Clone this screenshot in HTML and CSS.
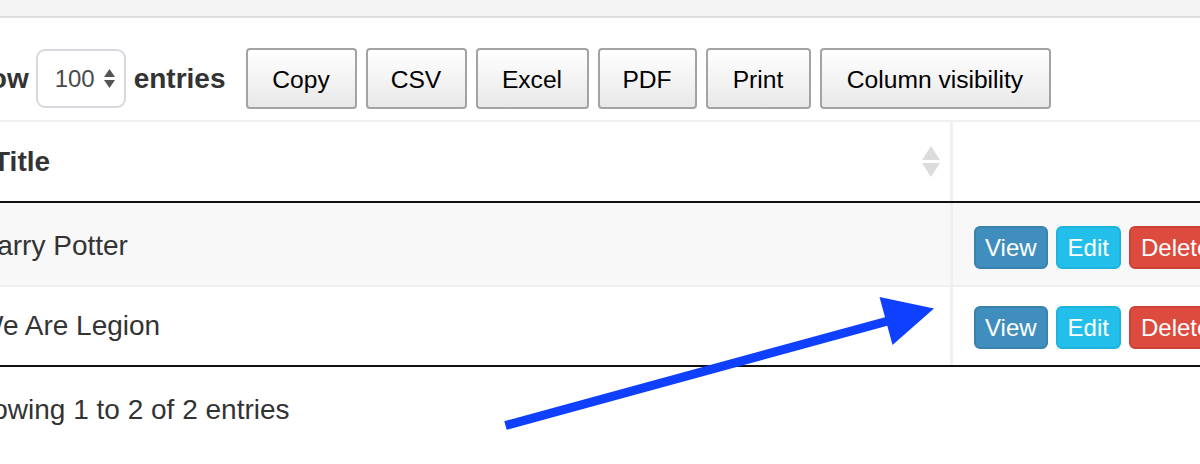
FILE: index.html
```html
<!DOCTYPE html>
<html lang="en">
<head>
<meta charset="utf-8">
<title>Books</title>
<link rel="stylesheet" href="styles.css">
</head>
<body>
<div class="topbar"></div>

<div class="toolbar">
  <div class="length">
    <span class="lbl">Show</span>
    <div class="select">
      <span>100</span>
      <svg class="spin" width="11" height="20" viewBox="0 0 11 20"><polygon points="5.5,0 11,8 0,8" fill="#555"/><polygon points="0,11 11,11 5.5,19" fill="#555"/></svg>
    </div>
    <span class="lbl">entries</span>
  </div>
  <div class="buttons">
    <button class="dt-btn w-copy">Copy</button>
    <button class="dt-btn w-csv">CSV</button>
    <button class="dt-btn w-excel">Excel</button>
    <button class="dt-btn w-pdf">PDF</button>
    <button class="dt-btn w-print">Print</button>
    <button class="dt-btn w-colvis">Column visibility</button>
  </div>
</div>

<div class="table">
  <div class="thead">
    <div class="c-title th">
      <span>Title</span>
      <svg class="sort" width="18" height="32" viewBox="0 0 18 32"><polygon points="9,0 18,14 0,14" fill="#dcdcdc"/><polygon points="0,17 18,17 9,31" fill="#dcdcdc"/></svg>
    </div>
    <div class="c-act"></div>
  </div>
  <div class="row odd">
    <div class="c-title">Harry Potter</div>
    <div class="c-act">
      <span class="bx bx-view">View</span>
      <span class="bx bx-edit">Edit</span>
      <span class="bx bx-del">Delete</span>
    </div>
  </div>
  <div class="row even">
    <div class="c-title">We Are Legion</div>
    <div class="c-act">
      <span class="bx bx-view">View</span>
      <span class="bx bx-edit">Edit</span>
      <span class="bx bx-del">Delete</span>
    </div>
  </div>
</div>

<div class="info">Showing 1 to 2 of 2 entries</div>

<svg class="annot" width="1200" height="464" viewBox="0 0 1200 464">
  <line x1="505.5" y1="425.5" x2="888" y2="321" stroke="#1040ff" stroke-width="9"/>
  <polygon points="879.5,297 934,308.5 892.5,345" fill="#1040ff"/>
</svg>
</body>
</html>
```

FILE: styles.css
```css
html, body {
  margin: 0;
  padding: 0;
}
body {
  width: 1200px;
  height: 464px;
  overflow: hidden;
  position: relative;
  background: #fff;
  color: #333;
  font-family: "Liberation Sans", Arial, Helvetica, sans-serif;
  font-size: 28px;
}

.topbar {
  height: 16px;
  background: #f4f4f4;
  border-bottom: 2px solid #dedede;
}

.toolbar {
  display: flex;
  align-items: center;
  height: 61px;
  margin-top: 30px;
  margin-left: -46px;
}
.length {
  display: flex;
  align-items: center;
  gap: 7px;
}
.lbl {
  font-weight: bold;
  color: #333;
}
.length .lbl:last-child {
  margin-left: 1px;
}
.select {
  box-sizing: border-box;
  width: 90px;
  height: 59px;
  border: 2px solid #d6d9de;
  border-radius: 9px;
  display: flex;
  align-items: center;
  justify-content: space-between;
  padding: 0 9px 0 17px;
  font-size: 24px;
  color: #4a4a4a;
}
.spin {
  display: block;
  margin-top: 1px;
}

.buttons {
  display: flex;
  gap: 9px;
  margin-left: 20px;
}
.dt-btn {
  box-sizing: border-box;
  height: 61px;
  padding: 0;
  border: 2px solid #a3a3a3;
  border-radius: 4px;
  background: linear-gradient(to bottom, #ffffff 0%, #e8e8e8 100%);
  font-family: "Liberation Sans", Arial, Helvetica, sans-serif;
  font-size: 24.6px;
  color: #000;
  text-align: center;
  padding-top: 2px;
}
.w-copy { width: 111px; }
.w-csv { width: 101px; }
.w-excel { width: 113px; }
.w-pdf { width: 99px; }
.w-print { width: 105px; }
.w-colvis { width: 231px; }

.table {
  margin-top: 11px;
  margin-left: -43px;
  width: 1300px;
}
.thead {
  display: flex;
  height: 79px;
  border-top: 2px solid #f0f0f0;
  border-bottom: 2px solid #111;
}
.row {
  display: flex;
}
.row.odd {
  height: 82px;
  background: #f8f8f8;
}
.row.even {
  height: 78px;
  background: #fff;
  border-top: 2px solid #efefef;
  border-bottom: 2px solid #111;
}
.c-title {
  box-sizing: border-box;
  width: 993px;
  flex: none;
  display: flex;
  align-items: center;
  padding-left: 20px;
}
.row.odd .c-title {
  padding-top: 4px;
}
.c-title.th {
  padding-left: 36px;
  padding-right: 10px;
  justify-content: space-between;
  font-weight: bold;
}
.sort {
  display: block;
  margin-top: 1px;
}
.c-act {
  flex: 1;
  border-left: 3px solid #f0f0f0;
  display: flex;
  align-items: flex-end;
  gap: 8px;
  padding-left: 21px;
  padding-bottom: 16px;
}
.thead .c-act {
  padding-bottom: 0;
}
.bx {
  box-sizing: border-box;
  height: 43px;
  display: inline-flex;
  align-items: center;
  padding: 0 10px;
  border: 2px solid transparent;
  border-radius: 6px;
  font-size: 24px;
  color: #fff;
  white-space: nowrap;
}
.bx-view {
  padding: 0 9px;
  background: #3f8ebd;
  border-color: #3982b0;
}
.bx-edit {
  background: #21bfe9;
  border-color: #1cb3dc;
}
.bx-del {
  background: #dc4b3e;
  border-color: #cc4237;
}

.info {
  margin-top: 27px;
  margin-left: -42px;
  line-height: 32px;
  white-space: nowrap;
}

.annot {
  position: absolute;
  left: 0;
  top: 0;
  pointer-events: none;
}
```
